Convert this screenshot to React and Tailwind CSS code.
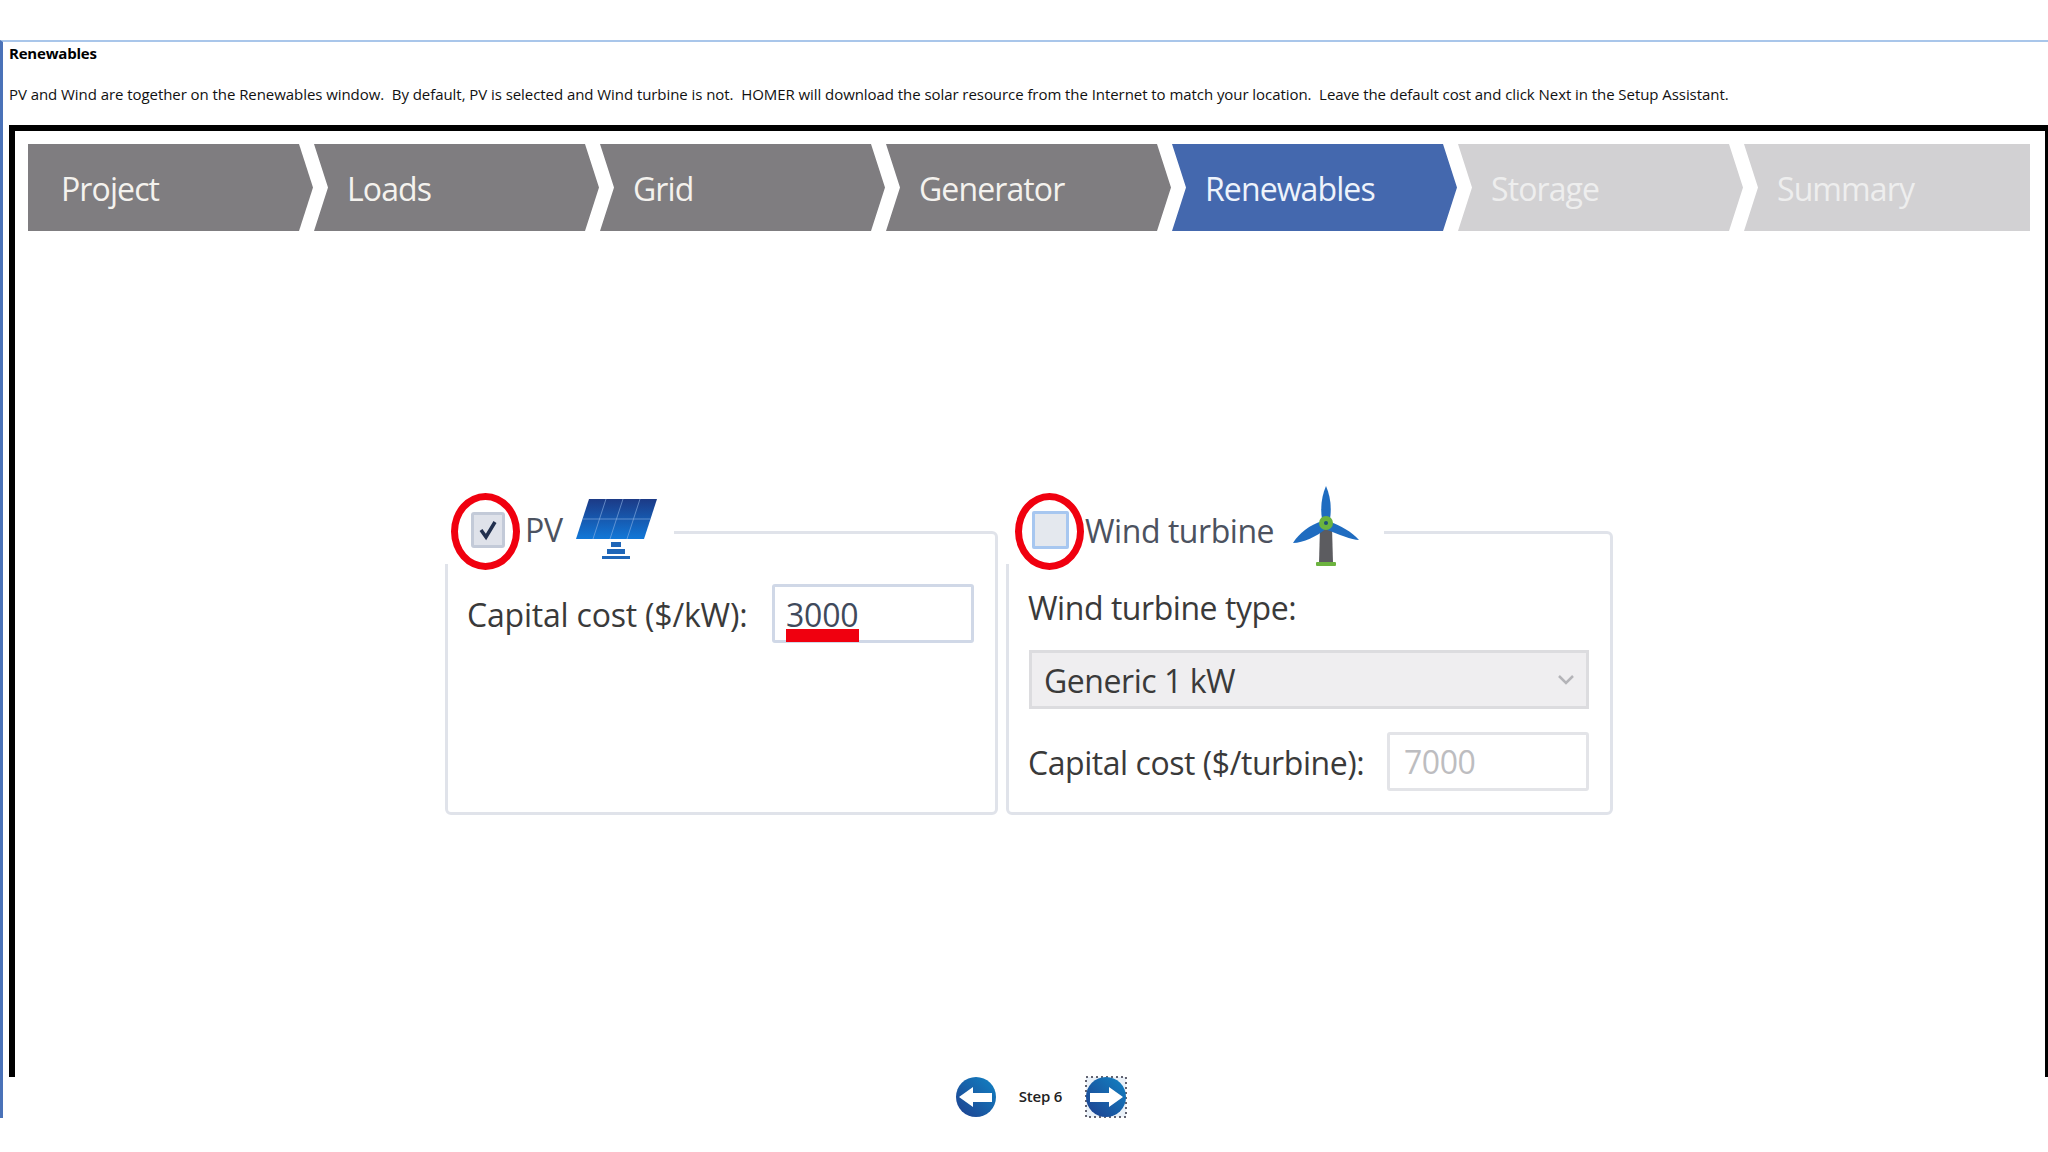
const font = { fontFamily: '"Open Sans", "Noto Sans", sans-serif' }

const steps = [
  { label: 'Project', color: 'bg-[#7f7d80] text-[#f4f2ee]', shape: '[clip-path:polygon(0_0,271px_0,285px_50%,271px_100%,0_100%)]' },
  { label: 'Loads', color: 'bg-[#7f7d80] text-[#f4f2ee]', shape: '[clip-path:polygon(0_0,271px_0,285px_50%,271px_100%,0_100%,14px_50%)]' },
  { label: 'Grid', color: 'bg-[#7f7d80] text-[#f4f2ee]', shape: '[clip-path:polygon(0_0,271px_0,285px_50%,271px_100%,0_100%,14px_50%)]' },
  { label: 'Generator', color: 'bg-[#7f7d80] text-[#f4f2ee]', shape: '[clip-path:polygon(0_0,271px_0,285px_50%,271px_100%,0_100%,14px_50%)]' },
  { label: 'Renewables', color: 'bg-[#4468ae] text-[#eef3fb]', shape: '[clip-path:polygon(0_0,271px_0,285px_50%,271px_100%,0_100%,14px_50%)]' },
  { label: 'Storage', color: 'bg-[#d2d1d3] text-[#eeeeee]', shape: '[clip-path:polygon(0_0,271px_0,285px_50%,271px_100%,0_100%,14px_50%)]' },
  { label: 'Summary', color: 'bg-[#d2d1d3] text-[#eeeeee]', shape: '[clip-path:polygon(0_0,100%_0,100%_100%,0_100%,14px_50%)]' },
]

function SolarPanel() {
  return (
    <svg width="82" height="62" viewBox="0 0 82 62" className="shrink-0">
      <defs>
        <linearGradient id="solarFill" x1="0" y1="0" x2="0" y2="1">
          <stop offset="0" stopColor="#1c3a86" />
          <stop offset="1" stopColor="#1178d8" />
        </linearGradient>
      </defs>
      <polygon points="13,0 81,0 68,40 0,40" fill="url(#solarFill)" />
      <path d="M7 20H74M30 0L17 40M47 0L34 40M64 0L51 40" stroke="#8fb4e4" strokeOpacity="0.6" strokeWidth="1" fill="none" />
      <path d="M35 43h10v5H35zM31 50h18v5H31zM26 57h28v3H26z" fill="#1f66b8" />
    </svg>
  )
}

function Turbine() {
  return (
    <svg width="68" height="82" viewBox="0 0 68 82" className="shrink-0">
      <polygon points="28,42 40,42 41,78 27,78" fill="#5c5c60" />
      <rect x="24" y="77" width="20" height="4" rx="1" fill="#6cb33f" />
      <path d="M34 1C38 10 40 22 38 34H30C28 22 30 10 34 1Z" fill="#1f6cc0" />
      <path d="M1 58C7 48 18 40 30 36L34 44C25 51 11 58 1 58Z" fill="#1f6cc0" />
      <path d="M67 55C60 55 46 49 35 45L38 37C48 40 60 47 67 55Z" fill="#1f6cc0" />
      <circle cx="34" cy="38" r="7" fill="#6cb33f" />
      <circle cx="34" cy="38" r="2" fill="#1d4f7a" />
    </svg>
  )
}

function NavArrow({ dir, focused }) {
  const id = dir === 'left' ? 'navLeft' : 'navRight'
  return (
    <svg width="44" height="44" viewBox="0 0 44 44" className="shrink-0">
      <defs>
        <linearGradient id={id} x1="0" y1="1" x2="1" y2="0">
          <stop offset="0" stopColor="#1f3f8e" />
          <stop offset="1" stopColor="#1183c4" />
        </linearGradient>
      </defs>
      {focused && <rect x="2" y="2" width="40" height="40" fill="#eaf1f8" stroke="#334" strokeWidth="1.5" strokeDasharray="2 3" />}
      <circle cx="22" cy="22" r="20" fill={`url(#${id})`} />
      {dir === 'left'
        ? <polygon points="5,22 19,12 19,18 38,18 38,27 19,27 19,32" fill="#fff" />
        : <polygon points="39,22 25,12 25,18 6,18 6,27 25,27 25,32" fill="#fff" />}
    </svg>
  )
}

export default function App() {
  return (
    <div className="w-[2048px] h-[1152px] bg-white overflow-hidden text-[#333]" style={font}>
      <div className="h-[40px]" />
      <div className="h-[1078px] border-t-2 border-t-[#a9c6ea] border-l-[3px] border-l-[#4a72b8]">
        <div className="pl-[6px] pt-[1px] text-[15px] leading-[20px] font-bold text-black tracking-[-0.2px]">Renewables</div>
        <p className="pl-[6px] mt-[21px] h-[21px] text-[15px] leading-[20px] text-[#111] whitespace-pre tracking-[-0.06px]">
          PV and Wind are together on the Renewables window.  By default, PV is selected and Wind turbine is not.  HOMER will download the solar resource from the Internet to match your location.  Leave the default cost and click Next in the Setup Assistant.
        </p>
        <div className="ml-[6px] mt-[20px] h-[952px] border-t-[6px] border-l-[6px] border-r-[3px] border-black border-b-0 pt-[13px] pl-[13px]">
          <div className="flex h-[87px] text-[32px] tracking-[-0.9px]">
            {steps.map(step => (
              <div key={step.label} className={`w-[286px] h-full flex items-center pl-[33px] pt-[2px] ${step.color} ${step.shape}`}>
                {step.label}
              </div>
            ))}
          </div>

          <div className="flex gap-[8px] mt-[300px] ml-[417px] text-[32px] tracking-[-0.2px] text-[#3a3a3a]">
            {/* PV */}
            <div className="w-[553px] h-[284px] border-[3px] border-[#e0e3ea] rounded-[6px]">
              <div className="w-fit h-[66px] -mt-[36px] -ml-[3px] pl-[26px] pr-[16px] bg-white flex items-center">
                <span className="relative w-[34px] h-[36px] mr-[20px] -mt-[3px] shrink-0 rounded-[3px] border-[3px] border-[#c3cad8] bg-[#dfe2ea] flex items-center justify-center">
                  <svg width="24" height="24" viewBox="0 0 24 24"><path d="M5 12l5 7L19 4" stroke="#22304f" strokeWidth="3.5" fill="none" /></svg>
                  <span className="absolute left-[-23px] top-[-22px] w-[69px] h-[77px] rounded-[50%] border-[7px] border-[#f0000f]" />
                </span>
                <span className="mr-[13px] -mt-[2px] text-[#4c5260]">PV</span>
                <span className="-mt-[2px] flex"><SolarPanel /></span>
              </div>
              <div className="flex items-center mt-[20px] pl-[19px]">
                <span className="w-[305px] shrink-0 pt-[3px]">Capital cost ($/kW):</span>
                <span className="relative w-[202px] h-[59px] border-[3px] border-[#d0d8e7] rounded-[3px] pl-[11px] pt-[2px] flex items-center text-[#3f4a5c]">
                  3000
                  <span className="absolute left-[11px] bottom-[-2px] w-[73px] h-[13px] bg-[#f0000f]" />
                </span>
              </div>
            </div>

            {/* Wind */}
            <div className="w-[607px] h-[284px] border-[3px] border-[#e0e3ea] rounded-[6px] tracking-[-0.45px]">
              <div className="w-fit h-[66px] -mt-[36px] -ml-[3px] pl-[26px] pr-[24px] bg-white flex items-center">
                <span className="relative w-[37px] h-[38px] mr-[16px] -mt-[3px] shrink-0 rounded-[2px] border-[3px] border-[#a7c7f0] bg-[#e4e8ee] flex items-center justify-center">
                  <span className="absolute left-[-20px] top-[-21px] w-[69px] h-[77px] rounded-[50%] border-[7px] border-[#f0000f]" />
                </span>
                <span className="mr-[18px] -mt-[1px] text-[#4c5260]">Wind turbine</span>
                <span className="-mt-[10px] flex"><Turbine /></span>
              </div>
              <div className="pl-[19px] mt-[22px] leading-[44px]">Wind turbine type:</div>
              <div className="ml-[20px] mt-[20px] w-[560px] h-[59px] bg-[#efeef0] border-[3px] border-[#dcdcdf] pl-[12px] pr-[12px] pt-[2px] flex items-center justify-between">
                Generic 1 kW
                <svg width="16" height="10" viewBox="0 0 16 10" className="-mt-[2px]"><path d="M1 1l7 7 7-7" stroke="#b4b4b8" strokeWidth="2.5" fill="none" /></svg>
              </div>
              <div className="flex items-center pl-[19px] mt-[23px]">
                <span className="w-[359px] shrink-0 pt-[2px]">Capital cost ($/turbine):</span>
                <span className="w-[202px] h-[59px] border-[3px] border-[#e3e4e8] rounded-[3px] pl-[14px] flex items-center text-[#bdbdc0]">7000</span>
              </div>
            </div>
          </div>
        </div>
        <div className="flex items-center justify-center h-[41px] mt-[-1px] pl-[30px] text-[15px] font-semibold tracking-[-0.2px] text-[#222]">
          <NavArrow dir="left" />
          <span className="w-[86px] text-center">Step 6</span>
          <NavArrow dir="right" focused />
        </div>
      </div>
    </div>
  )
}
